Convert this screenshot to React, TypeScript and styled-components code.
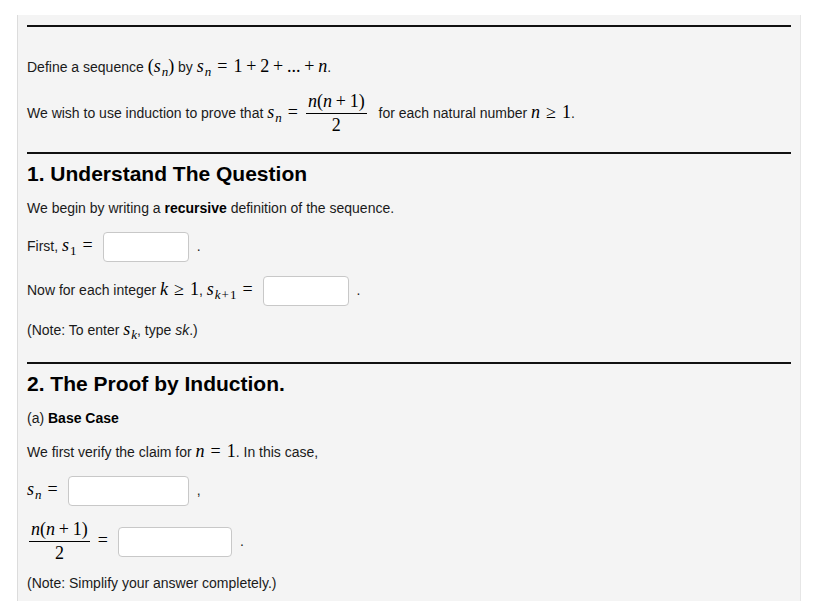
import { FC, ReactNode } from "react";
import styled, { createGlobalStyle } from "styled-components";

const GlobalStyle = createGlobalStyle`
  html, body {
    margin: 0;
    padding: 0;
    background: #ffffff;
  }
  body {
    font-family: Arial, "Liberation Sans", sans-serif;
    font-size: 14px;
    color: #1a1a1a;
  }
`;

const Page = styled.div`
  padding: 15px 17px 0 17px;
  height: 601px;
  box-sizing: border-box;
  overflow: hidden;
`;

const Panel = styled.div`
  background: #f4f4f4;
  border-left: 1px solid #dcdcdc;
  border-right: 1px solid #e6e6e6;
  padding: 10px 9px 20px 9px;
  min-height: 600px;
`;

const Rule = styled.div<{ $mt?: number }>`
  height: 2px;
  background: #111;
  margin-top: ${(p) => p.$mt ?? 0}px;
`;

const Heading = styled.h3<{ $mt: number }>`
  margin: ${(p) => p.$mt}px 0 0 0;
  font-size: 21px;
  line-height: 24px;
  font-weight: bold;
  color: #000;
`;

const Para = styled.div<{ $mt: number }>`
  margin-top: ${(p) => p.$mt}px;
  line-height: 20px;
  white-space: nowrap;
`;

const Bold = styled.b`
  color: #000;
`;

const Math = styled.span`
  font-family: "Liberation Serif", "DejaVu Serif", serif;
  font-size: 18px;
  line-height: 1;
  color: #000;
  white-space: nowrap;
`;

const V = styled.i`
  font-style: italic;
`;

const Sub = styled.span`
  font-size: 13px;
  position: relative;
  top: 4px;
  line-height: 0;
  margin-left: 1px;
`;

const SubOp = styled.span`
  margin: 0 1px;
`;

const Bin = styled.span`
  margin: 0 3.8px;
`;

const Rel = styled.span`
  margin: 0 6px;
`;

const Frac = styled.span<{ $mr: number }>`
  display: inline-flex;
  flex-direction: column;
  align-items: center;
  vertical-align: middle;
  line-height: 19px;
  margin: 0 ${(p) => p.$mr}px 0 2px;
`;

const Num = styled.span`
  padding: 0 2px 2px 2px;
  border-bottom: 1px solid #000;
`;

const Den = styled.span`
  padding-top: 2px;
`;

const Field = styled.input<{ $w: number }>`
  width: ${(p) => p.$w}px;
  height: 30px;
  box-sizing: border-box;
  border: 1px solid #c8c8c8;
  border-radius: 4px;
  background: #fff;
  vertical-align: middle;
  margin: 0 8px 0 4px;
  padding: 0 6px;
`;

const SN: FC<{ sub: ReactNode }> = ({ sub }) => (
  <>
    <V>s</V>
    <Sub>{sub}</Sub>
  </>
);

const NFrac: FC<{ mr: number }> = ({ mr }) => (
  <Frac $mr={mr}>
    <Num>
      <V>n</V>(<V>n</V>
      <Bin>+</Bin>1)
    </Num>
    <Den>2</Den>
  </Frac>
);

export default function App() {
  return (
    <Page>
      <GlobalStyle />
      <Panel>
        <Rule />
        <Para $mt={30}>
          Define a sequence{" "}
          <Math>
            (<SN sub={<V>n</V>} />)
          </Math>{" "}
          by{" "}
          <Math>
            <SN sub={<V>n</V>} />
            <Rel>=</Rel>1<Bin>+</Bin>2<Bin>+</Bin>...<Bin>+</Bin>
            <V>n</V>
          </Math>
          .
        </Para>
        <Para $mt={15}>
          We wish to use induction to prove that{" "}
          <Math>
            <SN sub={<V>n</V>} />
            <Rel>=</Rel>
            <NFrac mr={8} />
          </Math>{" "}
          for each natural number{" "}
          <Math>
            <V>n</V>
            <Rel>≥</Rel>1
          </Math>
          .
        </Para>
        <Rule $mt={17} />
        <Heading $mt={8}>1. Understand The Question</Heading>
        <Para $mt={12}>
          We begin by writing a <Bold>recursive</Bold> definition of the sequence.
        </Para>
        <Para $mt={14}>
          First,{" "}
          <Math>
            <SN sub="1" />
            <Rel>=</Rel>
          </Math>
          <Field $w={86} />.
        </Para>
        <Para $mt={14}>
          Now for each integer{" "}
          <Math>
            <V>k</V>
            <Rel>≥</Rel>1
          </Math>
          ,{" "}
          <Math>
            <SN
              sub={
                <>
                  <V>k</V>
                  <SubOp>+</SubOp>1
                </>
              }
            />
            <Rel>=</Rel>
          </Math>
          <Field $w={86} />.
        </Para>
        <Para $mt={14}>
          (Note: To enter{" "}
          <Math>
            <SN sub={<V>k</V>} />
          </Math>
          , type <i>sk</i>.)
        </Para>
        <Rule $mt={22} />
        <Heading $mt={8}>2. The Proof by Induction.</Heading>
        <Para $mt={12}>
          (a) <Bold>Base Case</Bold>
        </Para>
        <Para $mt={14}>
          We first verify the claim for{" "}
          <Math>
            <V>n</V>
            <Rel>=</Rel>1
          </Math>
          . In this case,
        </Para>
        <Para $mt={14}>
          <Math>
            <SN sub={<V>n</V>} />
            <Rel>=</Rel>
          </Math>
          <Field $w={121} />,
        </Para>
        <Para $mt={14}>
          <Math>
            <NFrac mr={2} />
            <Rel>=</Rel>
          </Math>
          <Field $w={114} />.
        </Para>
        <Para $mt={10}>(Note: Simplify your answer completely.)</Para>
      </Panel>
    </Page>
  );
}
